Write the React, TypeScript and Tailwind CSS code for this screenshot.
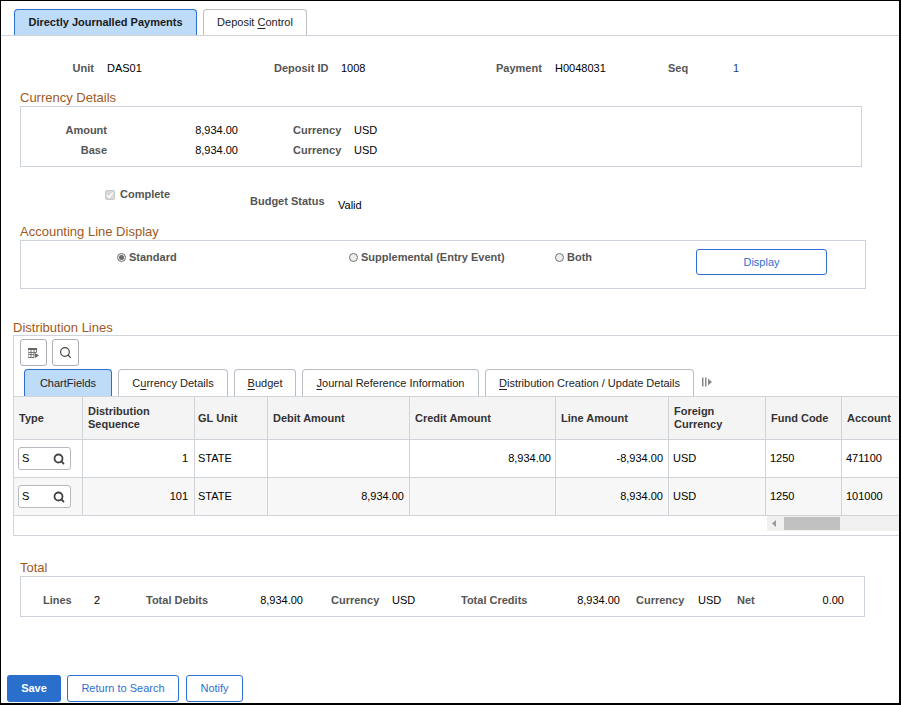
import { Search } from 'lucide-react';

const lbl = 'font-bold text-[#555]';
const sectionHead = 'h-[16px] text-[13px] leading-[16px] text-[#a0591d]';

const rows = [
  { seq: '1', debit: '', credit: '8,934.00', line: '-8,934.00', acct: '471100', bg: 'bg-white' },
  { seq: '101', debit: '8,934.00', credit: '', line: '8,934.00', acct: '101000', bg: 'bg-[#f7f7f7]' },
];

function Radio({ checked }: { checked?: boolean }) {
  return (
    <span className="flex h-[9px] w-[9px] items-center justify-center rounded-full border border-[#707070] bg-[#eee]">
      {checked && <span className="h-[5px] w-[5px] rounded-full bg-[#6a6a6a]" />}
    </span>
  );
}

function GridTab({ children, active, w }: { children: React.ReactNode; active?: boolean; w: string }) {
  return (
    <div
      className={`flex h-[27px] items-center justify-center rounded-t-[4px] border border-b-0 ${w} ${
        active ? 'border-[#2d6fd2] bg-[#bedcf8]' : 'border-[#b9bec5] bg-white'
      } text-[#222]`}
    >
      {children}
    </div>
  );
}

export default function App() {
  return (
    <div className="flex h-[705px] w-[901px] flex-col overflow-hidden border-t border-l border-r-2 border-b-2 border-black bg-white font-['Liberation_Sans',Arial,sans-serif] text-[11px] leading-[13px] text-black">
      {/* page tabs */}
      <div className="flex h-[35px] items-end gap-[6px] border-b border-[#cfd4da] pl-[13px]">
        <div className="flex h-[26px] w-[183px] items-center justify-center rounded-t-[4px] border border-b-0 border-[#2d6fd2] bg-[#bedcf8] font-bold text-[#1a1a1a]">
          Directly Journalled Payments
        </div>
        <div className="flex h-[26px] w-[104px] items-center justify-center rounded-t-[4px] border border-b-0 border-[#b9bec5] bg-white text-[#222]">
          Deposit&nbsp;<u className="underline-offset-2">C</u>ontrol
        </div>
      </div>

      {/* key fields */}
      <div className="mt-[26px] flex h-[13px] items-center whitespace-nowrap">
        <span className={`w-[93px] text-right ${lbl}`}>Unit</span>
        <span className="w-[180px] pl-[13px]">DAS01</span>
        <span className={`w-[67px] ${lbl}`}>Deposit ID</span>
        <span className="w-[155px]">1008</span>
        <span className={`w-[59px] ${lbl}`}>Payment</span>
        <span className="w-[113px]">H0048031</span>
        <span className={`w-[65px] ${lbl}`}>Seq</span>
        <span className="text-[#1d3f73]">1</span>
      </div>

      {/* currency details */}
      <div className={`mt-[15px] pl-[19px] ${sectionHead}`}>Currency Details</div>
      <div className="ml-[19px] h-[61px] w-[842px] border border-[#cdd3da] pt-[13px]">
        {[
          ['Amount', '8,934.00'],
          ['Base', '8,934.00'],
        ].map(([l, v]) => (
          <div key={l} className="flex h-[20px] items-center whitespace-nowrap">
            <span className={`w-[86px] text-right ${lbl}`}>{l}</span>
            <span className="w-[131px] text-right">{v}</span>
            <span className={`ml-[55px] w-[61px] ${lbl}`}>Currency</span>
            <span>USD</span>
          </div>
        ))}
      </div>

      {/* complete / budget status */}
      <div className="flex h-[45px] items-start whitespace-nowrap">
        <div className="mt-[21px] ml-[104px] flex h-[13px] items-center">
          <span className="flex h-[10px] w-[10px] items-center justify-center rounded-[2px] border border-[#c8c8c8] bg-[#d9d9d9]">
            <svg width="8" height="8" viewBox="0 0 8 8">
              <path d="M1 4.2 L3.2 6.2 L7 1.6" fill="none" stroke="#fff" strokeWidth="1.4" />
            </svg>
          </span>
          <span className={`ml-[5px] w-[130px] ${lbl}`}>Complete</span>
        </div>
        <span className={`mt-[28px] w-[88px] ${lbl}`}>Budget Status</span>
        <span className="mt-[32px]">Valid</span>
      </div>

      {/* accounting line display */}
      <div className={`mt-[12px] pl-[19px] ${sectionHead}`}>Accounting Line Display</div>
      <div className="ml-[19px] flex h-[49px] w-[846px] items-start border border-[#cdd3da] whitespace-nowrap">
        <div className="mt-[10px] ml-[96px] flex h-[13px] w-[232px] items-center gap-[3px]">
          <Radio checked />
          <span className={lbl}>Standard</span>
        </div>
        <div className="mt-[10px] flex h-[13px] w-[206px] items-center gap-[3px]">
          <Radio />
          <span className={lbl}>Supplemental (Entry Event)</span>
        </div>
        <div className="mt-[10px] flex h-[13px] w-[141px] items-center gap-[3px]">
          <Radio />
          <span className={lbl}>Both</span>
        </div>
        <button className="mt-[8px] flex h-[26px] w-[131px] items-center justify-center rounded-[3px] border border-[#2d6fd2] bg-white text-[#2d6fd2]">
          Display
        </button>
      </div>

      {/* distribution lines */}
      <div className={`mt-[30px] pt-[1px] pl-[12px] ${sectionHead}`}>Distribution Lines</div>
      <div className="ml-[12px] overflow-hidden border-t border-l border-b border-[#cfd4da] pb-[4px]">
        <div className="flex gap-[5px] pt-[3px] pl-[6px]">
          <button className="flex h-[27px] w-[27px] items-center justify-center rounded-[3px] border border-[#a9aeb5] bg-white">
            <svg width="11" height="10" viewBox="0 0 11 10">
              <rect x="0" y="0" width="9" height="2" fill="#666" />
              <path d="M0 2.5 V9.5 H6 M0.5 4.5 H8.5 M0.5 6.5 H6 M3 2 V9.5 M6 2 V9.5 M8.5 2 V4.5" fill="none" stroke="#777" strokeWidth="1" />
              <path d="M7 5 L11 7.5 L7 10 Z" fill="#666" />
            </svg>
          </button>
          <button className="flex h-[27px] w-[27px] items-center justify-center rounded-[3px] border border-[#a9aeb5] bg-white">
            <Search size={13} strokeWidth={2.2} color="#444" />
          </button>
        </div>

        <div className="mt-[3px] flex items-end gap-[6px] pl-[10px] whitespace-nowrap">
          <GridTab active w="w-[88px]">ChartFields</GridTab>
          <GridTab w="w-[110px]">
            C<u className="underline-offset-2">u</u>rrency Details
          </GridTab>
          <GridTab w="w-[62px]">
            <u className="underline-offset-2">B</u>udget
          </GridTab>
          <GridTab w="w-[177px]">
            <u className="underline-offset-2">J</u>ournal Reference Information
          </GridTab>
          <GridTab w="w-[209px]">
            <u className="underline-offset-2">D</u>istribution Creation / Update Details
          </GridTab>
          <svg className="mb-[9px] ml-[2px]" width="11" height="10" viewBox="0 0 11 10">
            <rect x="0" y="0.5" width="1.5" height="9" fill="#888" />
            <rect x="3" y="0.5" width="1.5" height="9" fill="#888" />
            <path d="M6 1.5 L10 5 L6 8.5 Z" fill="#888" />
          </svg>
        </div>

        {/* grid */}
        <div className="w-max border-t border-[#cfd4da]">
          <div className="flex h-[43px] border-b border-[#cfd4da] bg-[#f4f4f4] font-bold text-[#333]">
            <div className="flex w-[69px] items-center border-r border-[#cfd4da] pl-[5px]">Type</div>
            <div className="flex w-[112px] items-center border-r border-[#cfd4da] pl-[5px]">
              Distribution
              <br />
              Sequence
            </div>
            <div className="flex w-[73px] items-center border-r border-[#cfd4da] pl-[3px]">GL Unit</div>
            <div className="flex w-[142px] items-center border-r border-[#cfd4da] pl-[5px]">Debit Amount</div>
            <div className="flex w-[146px] items-center border-r border-[#cfd4da] pl-[5px]">Credit Amount</div>
            <div className="flex w-[113px] items-center border-r border-[#cfd4da] pl-[5px]">Line Amount</div>
            <div className="flex w-[97px] items-center border-r border-[#cfd4da] pl-[5px]">
              Foreign
              <br />
              Currency
            </div>
            <div className="flex w-[76px] items-center border-r border-[#cfd4da] pl-[5px]">Fund Code</div>
            <div className="flex w-[110px] items-center border-r border-[#cfd4da] pl-[5px]">Account</div>
          </div>
          {rows.map((r) => (
            <div key={r.seq} className={`flex h-[38px] border-b border-[#cfd4da] ${r.bg}`}>
              <div className="flex w-[69px] items-center border-r border-[#cfd4da] pl-[4px]">
                <div className="flex h-[23px] w-[53px] items-center justify-between rounded-[3px] border border-[#b5bac0] bg-white pr-[5px] pl-[3px]">
                  <span>S</span>
                  <Search size={12} strokeWidth={3.6} color="#444" />
                </div>
              </div>
              <div className="flex w-[112px] items-center justify-end border-r border-[#cfd4da] pr-[6px]">{r.seq}</div>
              <div className="flex w-[73px] items-center border-r border-[#cfd4da] pl-[3px]">STATE</div>
              <div className="flex w-[142px] items-center justify-end border-r border-[#cfd4da] pr-[5px]">{r.debit}</div>
              <div className="flex w-[146px] items-center justify-end border-r border-[#cfd4da] pr-[4px]">{r.credit}</div>
              <div className="flex w-[113px] items-center justify-end border-r border-[#cfd4da] pr-[5px]">{r.line}</div>
              <div className="flex w-[97px] items-center border-r border-[#cfd4da] pl-[4px]">USD</div>
              <div className="flex w-[76px] items-center border-r border-[#cfd4da] pl-[4px]">1250</div>
              <div className="flex w-[110px] items-center border-r border-[#cfd4da] pl-[4px]">{r.acct}</div>
            </div>
          ))}
        </div>
        <div className="ml-[753px] flex h-[15px] w-[140px] items-center bg-[#f0f0f0]">
          <svg className="ml-[5px]" width="4" height="7" viewBox="0 0 4 7">
            <path d="M4 0 L0 3.5 L4 7 Z" fill="#999" />
          </svg>
          <span className="ml-[8px] h-[13px] w-[56px] bg-[#c1c1c1]" />
        </div>
      </div>

      {/* total */}
      <div className={`mt-[24px] pl-[19px] ${sectionHead}`}>Total</div>
      <div className="ml-[19px] h-[41px] w-[845px] border border-[#cdd3da] pt-[17px]">
        <div className="flex h-[13px] items-center whitespace-nowrap">
          <span className={`ml-[22px] w-[51px] ${lbl}`}>Lines</span>
          <span className="w-[52px]">2</span>
          <span className={`w-[63px] ${lbl}`}>Total Debits</span>
          <span className="w-[94px] text-right">8,934.00</span>
          <span className={`ml-[28px] w-[61px] ${lbl}`}>Currency</span>
          <span className="w-[69px]">USD</span>
          <span className={`w-[67px] ${lbl}`}>Total Credits</span>
          <span className="w-[92px] text-right">8,934.00</span>
          <span className={`ml-[16px] w-[62px] ${lbl}`}>Currency</span>
          <span className="w-[39px]">USD</span>
          <span className={`w-[18px] ${lbl}`}>Net</span>
          <span className="w-[89px] text-right">0.00</span>
        </div>
      </div>

      {/* footer buttons */}
      <div className="mt-auto flex pb-[1px] pl-[6px]">
        <button className="flex h-[27px] w-[54px] items-center justify-center rounded-[3px] bg-[#2b6fcc] font-bold text-white">
          Save
        </button>
        <button className="ml-[6px] flex h-[27px] w-[112px] items-center justify-center rounded-[3px] border border-[#2d6fd2] bg-white text-[#2d6fd2]">
          Return to Search
        </button>
        <button className="ml-[7px] flex h-[27px] w-[57px] items-center justify-center rounded-[3px] border border-[#2d6fd2] bg-white text-[#2d6fd2]">
          Notify
        </button>
      </div>
    </div>
  );
}
